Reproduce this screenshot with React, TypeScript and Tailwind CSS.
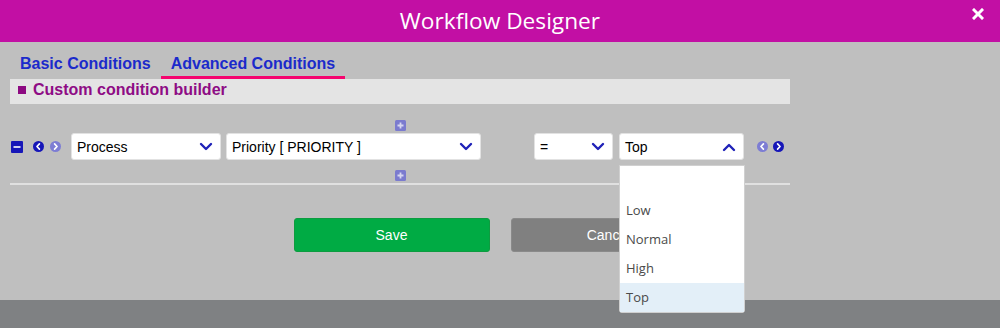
import React from "react";

const arial = { fontFamily: '"Liberation Sans", Arial, sans-serif' };
const segoe = { fontFamily: '"Open Sans", "Noto Sans", sans-serif' };

const Chevron = ({ up = false }: { up?: boolean }) => (
  <svg width="14" height="10" viewBox="0 0 14 10" className="shrink-0">
    <path
      d={up ? "M2 8 L7 3 L12 8" : "M2 2 L7 7 L12 2"}
      fill="none"
      stroke="#1f22b8"
      strokeWidth="2.4"
      strokeLinecap="round"
      strokeLinejoin="round"
    />
  </svg>
);

const CircleArrow = ({ dir, faded }: { dir: "left" | "right"; faded?: boolean }) => (
  <svg width="11" height="11" viewBox="0 0 12 12">
    <circle cx="6" cy="6" r="6" fill={faded ? "#7d7dd4" : "#1616b8"} />
    <path
      d={dir === "left" ? "M7 3.2 L4.3 6 L7 8.8" : "M5 3.2 L7.7 6 L5 8.8"}
      fill="none"
      stroke="#fff"
      strokeWidth="1.8"
      strokeLinecap="round"
      strokeLinejoin="round"
    />
  </svg>
);

const PlusBox = () => (
  <svg width="11" height="11" viewBox="0 0 11 11">
    <rect width="11" height="11" rx="1.5" fill="#7b7bcf" />
    <path d="M5.5 2.5 V8.5 M2.5 5.5 H8.5" stroke="#d6d6f0" strokeWidth="1.8" />
  </svg>
);

const MinusBox = () => (
  <svg width="12" height="12" viewBox="0 0 12 12">
    <rect width="12" height="12" rx="1" fill="#1616b8" />
    <path d="M2.5 6 H9.5" stroke="#fff" strokeWidth="1.6" />
  </svg>
);

const Select = ({
  value,
  width,
  up,
}: {
  value: string;
  width: string;
  up?: boolean;
}) => (
  <div
    className={`flex items-center justify-between h-[27px] bg-white rounded-[3px] border border-[#e2e2e2] pl-[5px] pr-[7px] ${width}`}
  >
    <span className="text-[14px] text-black pt-[2px]" style={arial}>
      {value}
    </span>
    <Chevron up={up} />
  </div>
);

const options = ["", "Low", "Normal", "High", "Top"];

export default function App() {
  return (
    <div className="w-[1000px] h-[328px] bg-[#bfbfbf] flex flex-col overflow-hidden">
      {/* Header */}
      <div className="relative h-[42px] bg-[#c20fa4] flex items-center justify-center shrink-0">
        <span className="text-white text-[22.7px] leading-none" style={segoe}>
          Workflow Designer
        </span>
        <svg
          width="12"
          height="12"
          viewBox="0 0 12 12"
          className="absolute right-[16px] top-[8px]"
        >
          <path d="M2 2 L10 10 M10 2 L2 10" stroke="#fff" strokeWidth="3" strokeLinecap="square" />
        </svg>
      </div>

      {/* Body */}
      <div className="flex-1">
        <div className="w-[780px] ml-[10px]">
          {/* Tabs */}
          <div className="flex items-end h-[37px] pl-[10px] gap-[10px]" style={arial}>
            <div className="pb-[3px] text-[16px] font-bold text-[#1b2acb]">Basic Conditions</div>
            <div className="px-[10px] pb-0 border-b-[3px] border-[#f5056e] text-[16px] font-bold text-[#1b2acb]">
              Advanced Conditions
            </div>
          </div>

          {/* Section header */}
          <div className="h-[25px] bg-[#e4e4e4] flex items-center pl-[8px] pb-[4px] gap-[7px]" style={arial}>
            <div className="w-[8px] h-[8px] bg-[#8d0a82]" />
            <span className="text-[16px] font-bold text-[#8e0c85]">Custom condition builder</span>
          </div>

          {/* Condition */}
          <div className="flex justify-center pt-[16px]">
            <PlusBox />
          </div>
          <div className="flex items-center mt-[2px] h-[27px]">
            <div className="flex items-center gap-[10px] w-[61px] pl-[1px]">
              <MinusBox />
              <div className="flex items-center gap-[6px]">
                <CircleArrow dir="left" />
                <CircleArrow dir="right" faded />
              </div>
            </div>
            <Select value="Process" width="w-[150px]" />
            <div className="w-[5px]" />
            <Select value="Priority [ PRIORITY ]" width="w-[255px]" />
            <div className="w-[53px]" />
            <Select value="=" width="w-[79px]" />
            <div className="w-[6px]" />
            <div className="relative">
              <Select value="Top" width="w-[125px]" up />
              {/* Open dropdown list */}
              <div
                className="absolute left-0 top-[32px] w-[126px] bg-white border border-[#d0d0d0] rounded-b-[3px] z-10"
                style={segoe}
              >
                {options.map((o, i) => (
                  <div
                    key={i}
                    className={`flex items-center px-[6px] text-[13px] text-[#4a4a4a] ${
                      o === "Top" ? "bg-[#e3eff8]" : ""
                    } ${i === 0 ? "h-[30px]" : "h-[29px]"}`}
                  >
                    {o}
                  </div>
                ))}
              </div>
            </div>
            <div className="flex items-center gap-[5px] ml-[13px]">
              <CircleArrow dir="left" faded />
              <CircleArrow dir="right" />
            </div>
          </div>
          <div className="flex justify-center mt-[10px]">
            <PlusBox />
          </div>
          <div className="h-[2px] bg-[#e0e0e0] mt-[2px]" />
        </div>

        {/* Buttons */}
        <div className="flex justify-center gap-[21px] mt-[33px]" style={arial}>
          <button className="w-[196px] h-[34px] rounded-[3px] bg-[#00ab44] border border-[#0d9c40] text-white text-[14px]">
            Save
          </button>
          <button className="w-[196px] h-[34px] rounded-[3px] bg-[#808080] border border-[#8a8a8a] text-white text-[14px]">
            Cancel
          </button>
        </div>
      </div>

      {/* Page behind */}
      <div className="h-[28px] bg-[#7f8183] shrink-0" />
    </div>
  );
}
